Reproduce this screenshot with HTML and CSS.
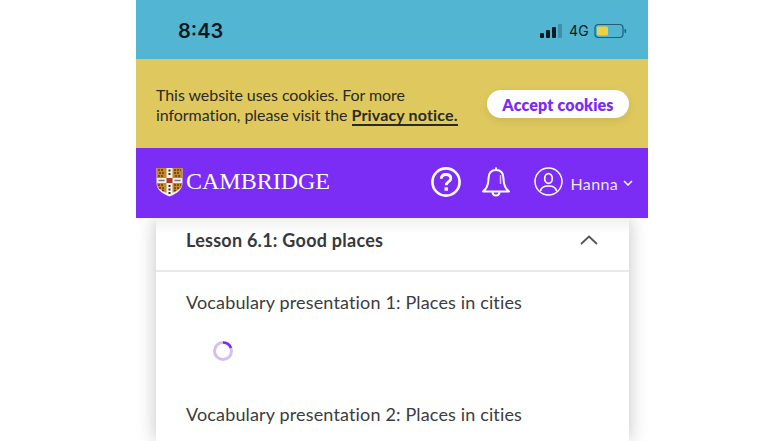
FILE: index.html
```html
<!DOCTYPE html>
<html lang="en">
<head>
<meta charset="utf-8">
<title>Lesson 6.1: Good places</title>
<link rel="stylesheet" href="styles.css">
</head>
<body>
<div class="phone">
  <div class="status">
    <span class="time">8:43</span>
    <div class="status-right">
      <svg class="signal" width="23" height="14" viewBox="0 0 23 14"><rect x="0" y="9" width="4" height="5" rx="1" fill="#0c1a22"/><rect x="6" y="6" width="4" height="8" rx="1" fill="#0c1a22"/><rect x="12" y="3" width="4" height="11" rx="1" fill="#0c1a22"/><rect x="18" y="0" width="4" height="14" rx="1" fill="#3f8fa8"/></svg>
      <span class="net">4G</span>
      <svg class="battery" width="33" height="16" viewBox="0 0 33 16"><rect x="1" y="1.500" width="28" height="13" rx="3.500" fill="none" stroke="#1f5f78" stroke-width="1.200"/><rect x="3" y="3.500" width="11" height="9" rx="1.500" fill="#f2cf3e"/><rect x="30.500" y="6" width="1.600" height="4" rx="0.800" fill="#1f5f78"/></svg>
    </div>
  </div>
  <div class="cookie">
    <p class="cookie-text">This website uses cookies. For more information, please visit the <a class="cookie-link">Privacy notice.</a></p>
    <button class="accept">Accept cookies</button>
  </div>
  <header class="nav">
    <div class="brand">
      <svg class="crest" width="27" height="30" viewBox="0 0 27 30">
        <path d="M0.500 1H26.500V16C26.500 23 20 27 13.500 29.500C7 27 0.500 23 0.500 16Z" fill="#f6f1e8"/>
        <path d="M0.500 1H10.500V11H0.500Z" fill="#bd8a2c"/>
        <path d="M16.500 1H26.500V11H16.500Z" fill="#bd8a2c"/>
        <path d="M0.500 16H10.500V25.800C5 23.500 0.500 21 0.500 16Z" fill="#c28c2a"/>
        <path d="M16.500 16H26.500C26.500 21 22 23.500 16.500 25.800Z" fill="#c28c2a"/>
        <path d="M10.500 11H16.500V16H10.500Z" fill="#b5342a"/>
        <path d="M2 3H8M3 6H9M2 9H7M18 3H25M18 6H24M19 9H25M2 18H8M3 21H9M6 23.500H9M18 18H25M18 21H23M18 23.500H21" stroke="#7a2f1a" stroke-width="1.300" stroke-dasharray="2 1"/>
        <path d="M13.500 2.500V9.500M13.500 18V27" stroke="#30302e" stroke-width="2" stroke-dasharray="2 1.500"/>
        <path d="M2.500 13.500H8.500M18.500 13.500H24.500" stroke="#77776f" stroke-width="1.500"/>
      </svg>
      <span class="wordmark">CAMBRIDGE</span>
    </div>
    <div class="nav-actions">
      <svg class="ico-help" width="32" height="32" viewBox="0 0 32 32"><circle cx="16" cy="16" r="13.600" fill="none" stroke="#fff" stroke-width="2.600"/><path d="M11.300 12.800C11.300 9.900 13.300 8.500 16 8.500C18.800 8.500 20.800 10 20.800 12.400C20.800 15.800 16.200 15.600 16.200 19.300" fill="none" stroke="#fff" stroke-width="2.800"/><rect x="14.500" y="21.300" width="3.400" height="3.400" fill="#fff"/></svg>
      <svg class="ico-bell" width="30" height="31" viewBox="0 0 30 31"><path d="M15 1.500V4M15 4C9.500 4 7.500 8 7.500 12.500C7.500 18.500 6.500 22 2 25.500H28C23.500 22 22.500 18.500 22.500 12.500C22.500 8 20.500 4 15 4ZM11.500 25.500C11.500 28 13 29.500 15 29.500C17 29.500 18.500 28 18.500 25.500" fill="none" stroke="#fff" stroke-width="2" stroke-linejoin="round"/><path d="M19.500 9V18" stroke="#d8c2fb" stroke-width="1.500"/></svg>
      <div class="user">
        <svg width="29" height="29" viewBox="0 0 29 29"><circle cx="14.500" cy="14.500" r="13.500" fill="none" stroke="#fff" stroke-width="1.500"/><ellipse cx="14.500" cy="11.500" rx="3.800" ry="4.800" fill="none" stroke="#fff" stroke-width="1.700"/><path d="M6.500 24C7 20.500 10 19 14.500 19C19 19 22 20.500 22.500 24" fill="none" stroke="#fff" stroke-width="1.700"/></svg>
        <span class="user-name">Hanna</span>
        <svg class="caret" width="10" height="6" viewBox="0 0 10 6"><path d="M1 1L5 5L9 1" fill="none" stroke="#fff" stroke-width="1.500"/></svg>
      </div>
    </div>
  </header>
  <main class="content">
    <section class="card">
      <div class="card-head">
        <h2 class="card-title">Lesson 6.1: Good places</h2>
        <svg width="18" height="10" viewBox="0 0 18 10"><path d="M1 9L9 1.500L17 9" fill="none" stroke="#55555a" stroke-width="1.800"/></svg>
      </div>
      <div class="card-body">
        <p class="item">Vocabulary presentation 1: Places in cities</p>
        <svg class="spinner" width="22" height="22" viewBox="0 0 22 22"><circle cx="11" cy="11" r="8.500" fill="none" stroke="#d3bff7" stroke-width="3"/><path d="M11 2.500A8.500 8.500 0 0 1 19 8" fill="none" stroke="#7b2cf5" stroke-width="2.500"/></svg>
        <p class="item">Vocabulary presentation 2: Places in cities</p>
      </div>
    </section>
  </main>
</div>
</body>
</html>
```
FILE: styles.css
```css
* { box-sizing: border-box; }
html, body { margin: 0; padding: 0; height: 441px; overflow: hidden; background: #fff; }
body { font-family: "Lato", "Noto Sans", sans-serif; }
.phone { width: 512px; height: 441px; margin: 0 auto; overflow: hidden; display: flex; flex-direction: column; }
.status { height: 59px; flex: none; background: #52b5d1; display: flex; align-items: center; justify-content: space-between; padding: 2px 21px 0 42px; }
.time { font-family: "Inter", "Liberation Sans", sans-serif; font-weight: 600; font-size: 20px; color: #0a1820; }
.status-right { display: flex; align-items: center; gap: 6px; }
.net { margin-right: -1px; font-family: "Inter", "Liberation Sans", sans-serif; font-size: 14px; color: #0a1820; letter-spacing: .3px; }
.cookie { height: 89px; flex: none; background: #dfc95f; display: flex; align-items: center; justify-content: space-between; padding: 0 19px 0 20px; }
.cookie-text { margin: 0; width: 320px; padding-top: 2px; font-size: 16px; line-height: 20px; letter-spacing: -.06px; color: #2b2a24; }
.cookie-link { font-weight: 700; letter-spacing: .15px; color: #2b2a24; border-bottom: 2px solid #2b2a24; }
.accept { height: 28px; width: 142px; flex: none; border: 0; border-radius: 14px; background: #fff; color: #7b2cf5; font-family: inherit; font-weight: 800; font-size: 16px; letter-spacing: .15px; padding: 1px 0 0; box-shadow: 0 3px 8px rgba(90,80,20,.15); }
.nav { height: 70px; flex: none; background: #7b2cf5; display: flex; align-items: center; justify-content: space-between; padding: 0 15px 3px 20px; position: relative; z-index: 2; }
.brand { display: flex; align-items: center; gap: 3px; }
.wordmark { font-family: "Liberation Serif", serif; font-size: 24px; color: #fff; }
.nav-actions { display: flex; align-items: center; }
.ico-help { margin-right: 19px; }
.ico-bell { margin-right: 23px; }
.user { display: flex; align-items: center; gap: 8px; color: #ece2fd; }
.user-name { padding-top: 3px; font-size: 16px; letter-spacing: .35px; }
.caret { margin-left: -3px; margin-top: 2px; }
.content { flex: 1; min-height: 0; padding: 0 19px 0 20px; }
.card { height: 100%; background: #fff; box-shadow: 0 0 18px rgba(0,0,0,.24); }
.card-head { height: 54px; display: flex; align-items: center; justify-content: space-between; padding: 0 31px 8px 30px; border-bottom: 2px solid #e9e9e9; background: linear-gradient(#f0f0f0, #fff 30%); }
.card-title { margin: 0; font-size: 18px; font-weight: 700; letter-spacing: .25px; color: #38383c; }
.card-body { padding: 18px 30px 0; }
.item { margin: 0; font-size: 18px; line-height: 24px; letter-spacing: .15px; color: #3c3c40; }
.spinner { display: block; margin: 26px 0 40px 26px; }
```
